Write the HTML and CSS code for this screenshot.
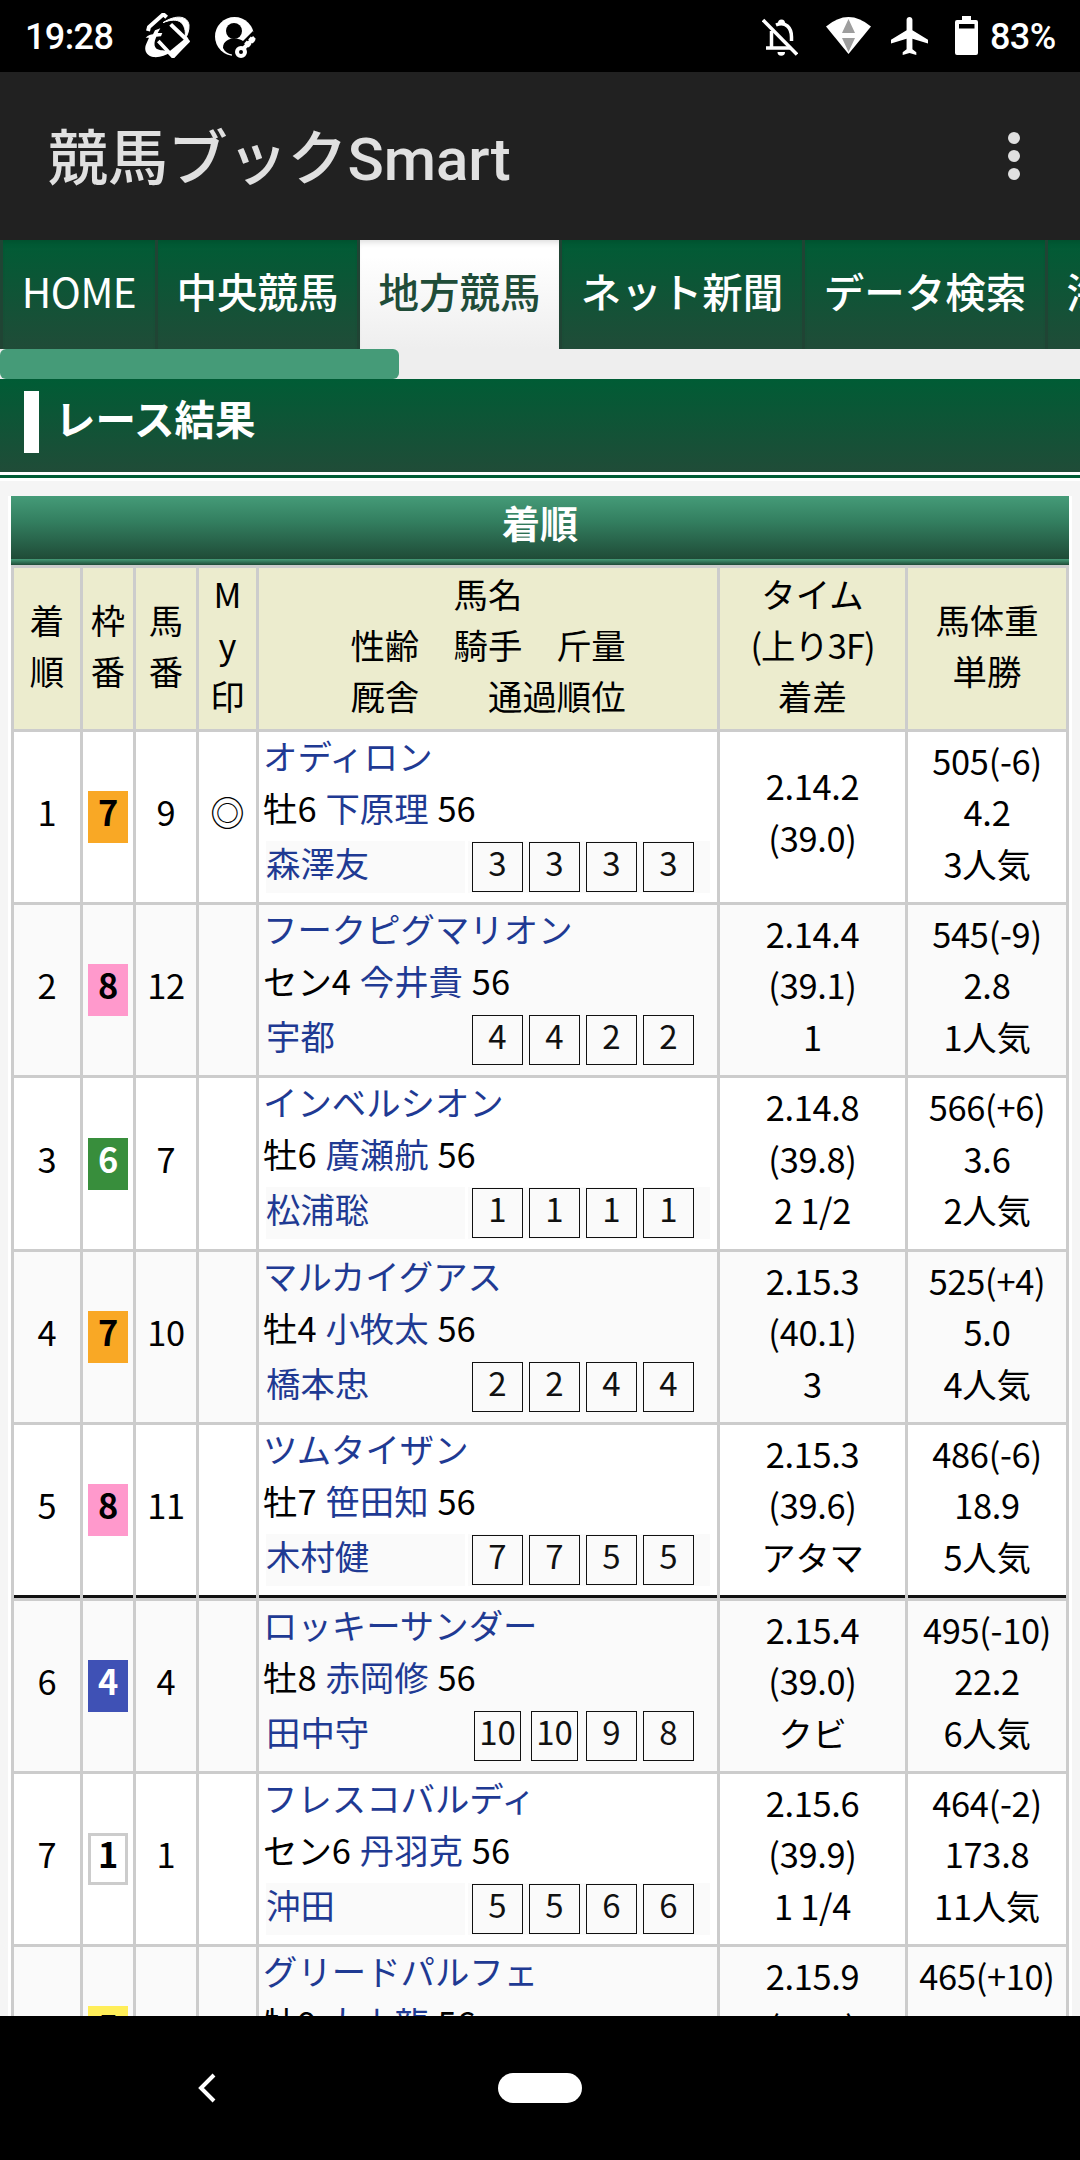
FILE: index.html
```html
<!DOCTYPE html>
<html lang="ja">
<head>
    <meta charset="UTF-8">
    <meta name="viewport" content="width=device-width, initial-scale=1.0">
    <title>競馬ブックSmart</title>
    <link rel="stylesheet" href="styles.css">
</head>
<body>
    <div class="status-bar">
        <span class="clock">19:28</span>
        <svg class="icon-logo" viewBox="0 0 135 135" fill="none" stroke="#fff">
            <path d="M9 54L12 42L55 4L65 13" stroke-width="12"/>
            <path d="M54 29C92 4 128 8 132 36C133 52 128 66 118 82C124 60 121 42 109 29C96 18 76 20 54 29Z" fill="#fff" stroke-width="3"/>
            <path d="M77 34L126 81" stroke-width="12"/>
            <path d="M131 80L84 131L40 84" stroke-width="11"/>
            <path d="M126 72L135 86L86 135L72 116Z" fill="#fff" stroke="none"/>
            <path d="M2 74C10 66 18 64 24 64L30 52L46 46L38 60L52 60L48 70L34 71C27 88 25 102 38 109C50 115 64 110 76 118C62 128 44 134 24 132C2 128 -4 108 4 92L12 74Z" fill="#fff" stroke="none"/>
        </svg>
        <svg class="icon-user" viewBox="0 0 41 41">
            <circle cx="19.500" cy="19.500" r="19.500" fill="#fff"/>
            <circle cx="19" cy="14" r="8" fill="#000"/>
            <path d="M8 31C8 24 14 21.500 19 21.500C23 21.500 26 22.500 28 24L38 14L41 18V41H17V37.500C13 37 10 35 8 31Z" fill="#000"/>
            <circle cx="26" cy="35" r="4" fill="none" stroke="#fff" stroke-width="4"/>
            <path d="M28 32L39.500 20.500M30.500 25L35 29M34.500 21L39 25" stroke="#fff" stroke-width="4" fill="none"/>
        </svg>
        <div class="status-right">
            <svg class="icon-bell" viewBox="0 0 36 38" fill="none" stroke="#fff" stroke-width="3.500">
                <path d="M1 2L35 36.500"/>
                <path d="M9.500 13V30M4 30H28"/>
                <path d="M14 7C24 3 29.500 10 29.500 19V23"/>
                <path d="M16 5A3.500 3.500 0 0 1 23 5L22 7H17ZM15.500 34H23A3.700 3.700 0 0 1 15.500 34Z" fill="#fff" stroke="none"/>
            </svg>
            <svg class="icon-wifi" viewBox="0 0 45 37">
                <path d="M0 9.500Q22.500 -9.500 45 9.500L22.500 37Z" fill="#fff"/>
                <path d="M22.500 2L29 16H16ZM16 21H29L22.500 35Z" fill="#9e9e9e"/>
            </svg>
            <svg class="icon-plane" viewBox="2 2 19 20" preserveAspectRatio="none">
                <path d="M21 16v-2l-8-5V3.500c0-.83-.67-1.500-1.500-1.500S10 2.670 10 3.500V9l-8 5v2l8-2.500V19l-2 1.500V22l3.500-1 3.500 1v-1.500L13 19v-5.500l8 2.500z" fill="#fff"/>
            </svg>
            <svg class="icon-battery" viewBox="0 0 23 39">
                <path d="M7 0H16V4H21Q23 4 23 6V37Q23 39 21 39H2Q0 39 0 37V6Q0 4 2 4H7Z" fill="#fff"/>
                <path d="M4 8H19.500V12.500H4Z" fill="#000"/>
            </svg>
            <span class="percent">83%</span>
        </div>
    </div>

    <header class="app-bar">
        <h1>競馬ブックSmart</h1>
        <div class="more"><i></i><i></i><i></i></div>
    </header>

    <main class="content">
        <nav class="tabs">
            <a class="tab tab-home">HOME</a>
            <a class="tab">中央競馬</a>
            <a class="tab active">地方競馬</a>
            <a class="tab wide">ネット新聞</a>
            <a class="tab wide">データ検索</a>
            <a class="tab">海外競馬</a>
        </nav>
        <div class="scroll-track"><div class="scroll-thumb"></div></div>

        <div class="page-title"><h2>レース結果</h2></div>

        <section class="result">
            <h3 class="caption">着順</h3>
            <table class="result-table">
                <colgroup>
                    <col class="c-rank"><col class="c-waku"><col class="c-num"><col class="c-mark"><col class="c-horse"><col class="c-time"><col class="c-weight">
                </colgroup>
                <thead>
                    <tr>
                        <th>着<br>順</th>
                        <th>枠<br>番</th>
                        <th>馬<br>番</th>
                        <th>M<br>y<br>印</th>
                        <th>馬名<br>性齢　騎手　斤量<br>厩舎　　通過順位</th>
                        <th>タイム<br><span class="latin">(上り3F)</span><br>着差</th>
                        <th>馬体重<br>単勝</th>
                    </tr>
                </thead>
                <tbody>
                    <tr>
                        <td>1</td>
                        <td><div class="waku w7">7</div></td>
                        <td>9</td>
                        <td><span class="mark">◎</span></td>
                        <td class="horse">
                            <a class="name">オディロン</a>
                            <div class="jockey">牡6 <a>下原理</a> 56</div>
                            <div class="sub"><a class="trainer">森澤友</a><div class="corners"><b>3</b><b>3</b><b>3</b><b>3</b></div></div>
                        </td>
                        <td>2.14.2<br>(39.0)</td>
                        <td>505(-6)<br>4.2<br>3人気</td>
                    </tr>
                    <tr>
                        <td>2</td>
                        <td><div class="waku w8">8</div></td>
                        <td>12</td>
                        <td></td>
                        <td class="horse">
                            <a class="name">フークピグマリオン</a>
                            <div class="jockey">セン4 <a>今井貴</a> 56</div>
                            <div class="sub"><a class="trainer">宇都</a><div class="corners"><b>4</b><b>4</b><b>2</b><b>2</b></div></div>
                        </td>
                        <td>2.14.4<br>(39.1)<br>1</td>
                        <td>545(-9)<br>2.8<br>1人気</td>
                    </tr>
                    <tr class="tall">
                        <td>3</td>
                        <td><div class="waku w6">6</div></td>
                        <td>7</td>
                        <td></td>
                        <td class="horse">
                            <a class="name">インベルシオン</a>
                            <div class="jockey">牡6 <a>廣瀬航</a> 56</div>
                            <div class="sub"><a class="trainer">松浦聡</a><div class="corners"><b>1</b><b>1</b><b>1</b><b>1</b></div></div>
                        </td>
                        <td>2.14.8<br>(39.8)<br>2 1/2</td>
                        <td>566(+6)<br>3.6<br>2人気</td>
                    </tr>
                    <tr>
                        <td>4</td>
                        <td><div class="waku w7">7</div></td>
                        <td>10</td>
                        <td></td>
                        <td class="horse">
                            <a class="name">マルカイグアス</a>
                            <div class="jockey">牡4 <a>小牧太</a> 56</div>
                            <div class="sub"><a class="trainer">橋本忠</a><div class="corners"><b>2</b><b>2</b><b>4</b><b>4</b></div></div>
                        </td>
                        <td>2.15.3<br>(40.1)<br>3</td>
                        <td>525(+4)<br>5.0<br>4人気</td>
                    </tr>
                    <tr class="line">
                        <td>5</td>
                        <td><div class="waku w8">8</div></td>
                        <td>11</td>
                        <td></td>
                        <td class="horse">
                            <a class="name">ツムタイザン</a>
                            <div class="jockey">牡7 <a>笹田知</a> 56</div>
                            <div class="sub"><a class="trainer">木村健</a><div class="corners"><b>7</b><b>7</b><b>5</b><b>5</b></div></div>
                        </td>
                        <td>2.15.3<br>(39.6)<br>アタマ</td>
                        <td>486(-6)<br>18.9<br>5人気</td>
                    </tr>
                    <tr>
                        <td>6</td>
                        <td><div class="waku w4">4</div></td>
                        <td>4</td>
                        <td></td>
                        <td class="horse">
                            <a class="name">ロッキーサンダー</a>
                            <div class="jockey">牡8 <a>赤岡修</a> 56</div>
                            <div class="sub"><a class="trainer">田中守</a><div class="corners"><b class="two">10</b><b class="two">10</b><b>9</b><b>8</b></div></div>
                        </td>
                        <td>2.15.4<br>(39.0)<br>クビ</td>
                        <td>495(-10)<br>22.2<br>6人気</td>
                    </tr>
                    <tr>
                        <td>7</td>
                        <td><div class="waku w1">1</div></td>
                        <td>1</td>
                        <td></td>
                        <td class="horse">
                            <a class="name">フレスコバルディ</a>
                            <div class="jockey">セン6 <a>丹羽克</a> 56</div>
                            <div class="sub"><a class="trainer">沖田</a><div class="corners"><b>5</b><b>5</b><b>6</b><b>6</b></div></div>
                        </td>
                        <td>2.15.6<br>(39.9)<br>1 1/4</td>
                        <td>464(-2)<br>173.8<br>11人気</td>
                    </tr>
                    <tr>
                        <td>8</td>
                        <td><div class="waku w5">5</div></td>
                        <td>6</td>
                        <td></td>
                        <td class="horse">
                            <a class="name">グリードパルフェ</a>
                            <div class="jockey">牡9 <a>大山龍</a> 56</div>
                        </td>
                        <td>2.15.9<br>(39.6)<br>&nbsp;</td>
                        <td>465(+10)<br>174.8<br>&nbsp;</td>
                    </tr>
                </tbody>
            </table>
        </section>
    </main>

    <footer class="nav-bar">
        <svg class="back" viewBox="0 0 18 30"><path d="M16 2L3 15L16 28" fill="none" stroke="#fff" stroke-width="4"/></svg>
        <div class="pill"></div>
    </footer>
</body>
</html>
```
FILE: styles.css
```css
* {
    margin: 0;
    padding: 0;
    box-sizing: border-box;
}

body {
    width: 1080px;
    height: 2160px;
    overflow: hidden;
    display: flex;
    flex-direction: column;
    font-family: "Noto Sans CJK JP", sans-serif;
    background: #000;
    color: #000;
}

svg {
    display: block;
    flex: none;
}

/* ステータスバー */
.status-bar {
    height: 72px;
    flex: none;
    display: flex;
    align-items: flex-start;
    padding-left: 25px;
    color: #fff;
    font: 500 36px/75px Roboto, sans-serif;
    letter-spacing: -0.6px;
}

.clock {
    width: 120px;
}

.icon-logo {
    width: 45px;
    height: 45px;
    margin-top: 13px;
}

.icon-user {
    width: 41px;
    height: 41px;
    margin: 17px 0 0 25px;
}

.status-right {
    display: flex;
    margin-left: auto;
    padding-right: 24px;
}

.icon-bell {
    width: 36px;
    height: 38px;
    margin: 18px 28px 0 0;
}

.icon-wifi {
    width: 45px;
    height: 37px;
    margin: 17px 20px 0 0;
}

.icon-plane {
    width: 37px;
    height: 38px;
    margin: 17px 27px 0 0;
}

.icon-battery {
    width: 23px;
    height: 39px;
    margin: 16px 12px 0 0;
}

.percent {
    width: 66px;
    white-space: nowrap;
}

/* アプリバー */
.app-bar {
    height: 168px;
    flex: none;
    display: flex;
    justify-content: space-between;
    padding: 0 60px 0 48px;
    background: #212121;
}

.app-bar h1 {
    padding-top: 4px;
    font: 500 60px/168px Roboto, "Noto Sans CJK JP", sans-serif;
    letter-spacing: -0.1px;
    color: #e0e0e0;
}

.more {
    display: flex;
    flex-direction: column;
    gap: 6px;
    padding-top: 60px;
}

.more i {
    width: 12px;
    height: 12px;
    border-radius: 50%;
    background: #e0e0e0;
}

/* コンテンツ */
.content {
    height: 1776px;
    flex: none;
    overflow: hidden;
    background: #f5f5f5;
}

.tabs {
    display: flex;
    height: 109px;
    overflow: hidden;
    background: #eee;
}

.tab {
    flex: none;
    width: 202px;
    padding-bottom: 9px;
    border-left: 3px solid #204434;
    background: linear-gradient(#005c35, #204c38);
    box-shadow: inset 0 6px 6px -4px rgba(0, 0, 0, 0.15);
    color: #fff;
    font-size: 40.5px;
    font-weight: 500;
    line-height: 101px;
    text-align: center;
    white-space: nowrap;
}

.tab-home {
    width: 155px;
    font-weight: 400;
    letter-spacing: -0.5px;
}

.tab.wide {
    width: 243px;
}

.tab.active {
    background: linear-gradient(#fff 15%, #eee);
    color: #204c38;
}

.scroll-track {
    height: 30px;
    background: #eee;
}

.scroll-thumb {
    width: 399px;
    height: 30px;
    border-radius: 6px;
    background: #459b78;
}

.page-title {
    height: 102px;
    padding: 12px 24px;
    border-bottom: 3px solid #fff;
    background: linear-gradient(#005c35, #204c38) 0 0 / 100% 93px no-repeat, linear-gradient(#fff 96px, #005c35 96px);
}

.page-title h2 {
    height: 62px;
    padding-left: 16px;
    border-left: 15px solid #fff;
    color: #fff;
    font-size: 40.5px;
    font-weight: 700;
    line-height: 54px;
}

.result {
    margin: 15px 8px 0;
    padding: 0 3px;
    background: #fff;
}

.caption {
    height: 69px;
    background: linear-gradient(#459b78, #337f60 40%, #1f4b37) 0 0 / 100% 63px no-repeat, linear-gradient(#459b78, #1f4b37) 0 63px / 100% 6px no-repeat;
    color: #fff;
    font-size: 38px;
    font-weight: 700;
    line-height: 52px;
    text-align: center;
}

/* 着順テーブル */
.result-table {
    width: 1058px;
    table-layout: fixed;
    border-collapse: separate;
    border-spacing: 3px;
    background: #ccc;
    font-size: 34.4px;
    line-height: 51.6px;
    text-align: center;
    white-space: nowrap;
}

.c-rank { width: 66px; }
.c-waku { width: 50px; }
.c-num { width: 60px; }
.c-mark { width: 57px; }
.c-horse { width: 458px; }
.c-time { width: 185px; }
.c-weight { width: 158px; }

.result-table th {
    height: 161px;
    padding-bottom: 8px;
    background: #ececce;
    font-weight: 400;
    line-height: 51px;
}

.latin {
    letter-spacing: -1px;
}

.result-table td {
    height: 170px;
    padding-bottom: 10px;
    background: #fff;
    letter-spacing: -0.3px;
}

.result-table tr:nth-child(even) td {
    background: #fafafa;
}

.result-table .tall td {
    height: 171px;
}

.result-table .line td {
    height: 173px;
    border-bottom: 3px solid #111;
}

.mark {
    letter-spacing: 0;
}

.result-table td .waku {
    width: 40px;
    height: 52px;
    margin: 10px auto 0;
    font-weight: 700;
    line-height: 41px;
}

.w1 { background: #fff; border: 3px solid #ccc; }
.result-table td .w1 { line-height: 35px; }
.w4 { background: #3f51b5; color: #fff; }
.w5 { background: #ffee58; }
.w6 { background: #388e3c; color: #fff; }
.w7 { background: #f9a825; }
.w8 { background: #ff99cc; }

.result-table td.horse {
    padding: 0 4px;
    text-align: left;
    vertical-align: top;
    letter-spacing: 0;
}

.horse a {
    color: #1f3a93;
}

.horse .name {
    display: block;
    height: 47px;
    line-height: 47px;
}

.jockey {
    height: 58px;
    line-height: 57px;
    word-spacing: 1.2px;
}

.sub {
    display: flex;
    gap: 3px;
    margin: 4px 3px 0;
    height: 52px;
}

.sub .trainer {
    width: 199px;
    height: 52px;
    background: #fafafa;
    line-height: 42px;
}

.corners {
    display: flex;
    width: 242px;
    padding: 1px 4px;
    gap: 6px;
    background: #fafafa;
}

.corners b {
    width: 51px;
    height: 50px;
    border: 1px solid #111;
    color: #111;
    font-size: 33px;
    font-weight: 400;
    line-height: 38px;
    text-align: center;
}

.corners .two {
    width: 47px;
    margin: 0 2px;
}

/* ナビゲーションバー */
.nav-bar {
    height: 144px;
    flex: none;
    display: flex;
    align-items: flex-start;
    padding: 57px 0 0 198px;
    background: #000;
}

.back {
    width: 18px;
    height: 30px;
}

.pill {
    width: 84px;
    height: 30px;
    margin-left: 282px;
    border-radius: 15px;
    background: #fff;
}
```
